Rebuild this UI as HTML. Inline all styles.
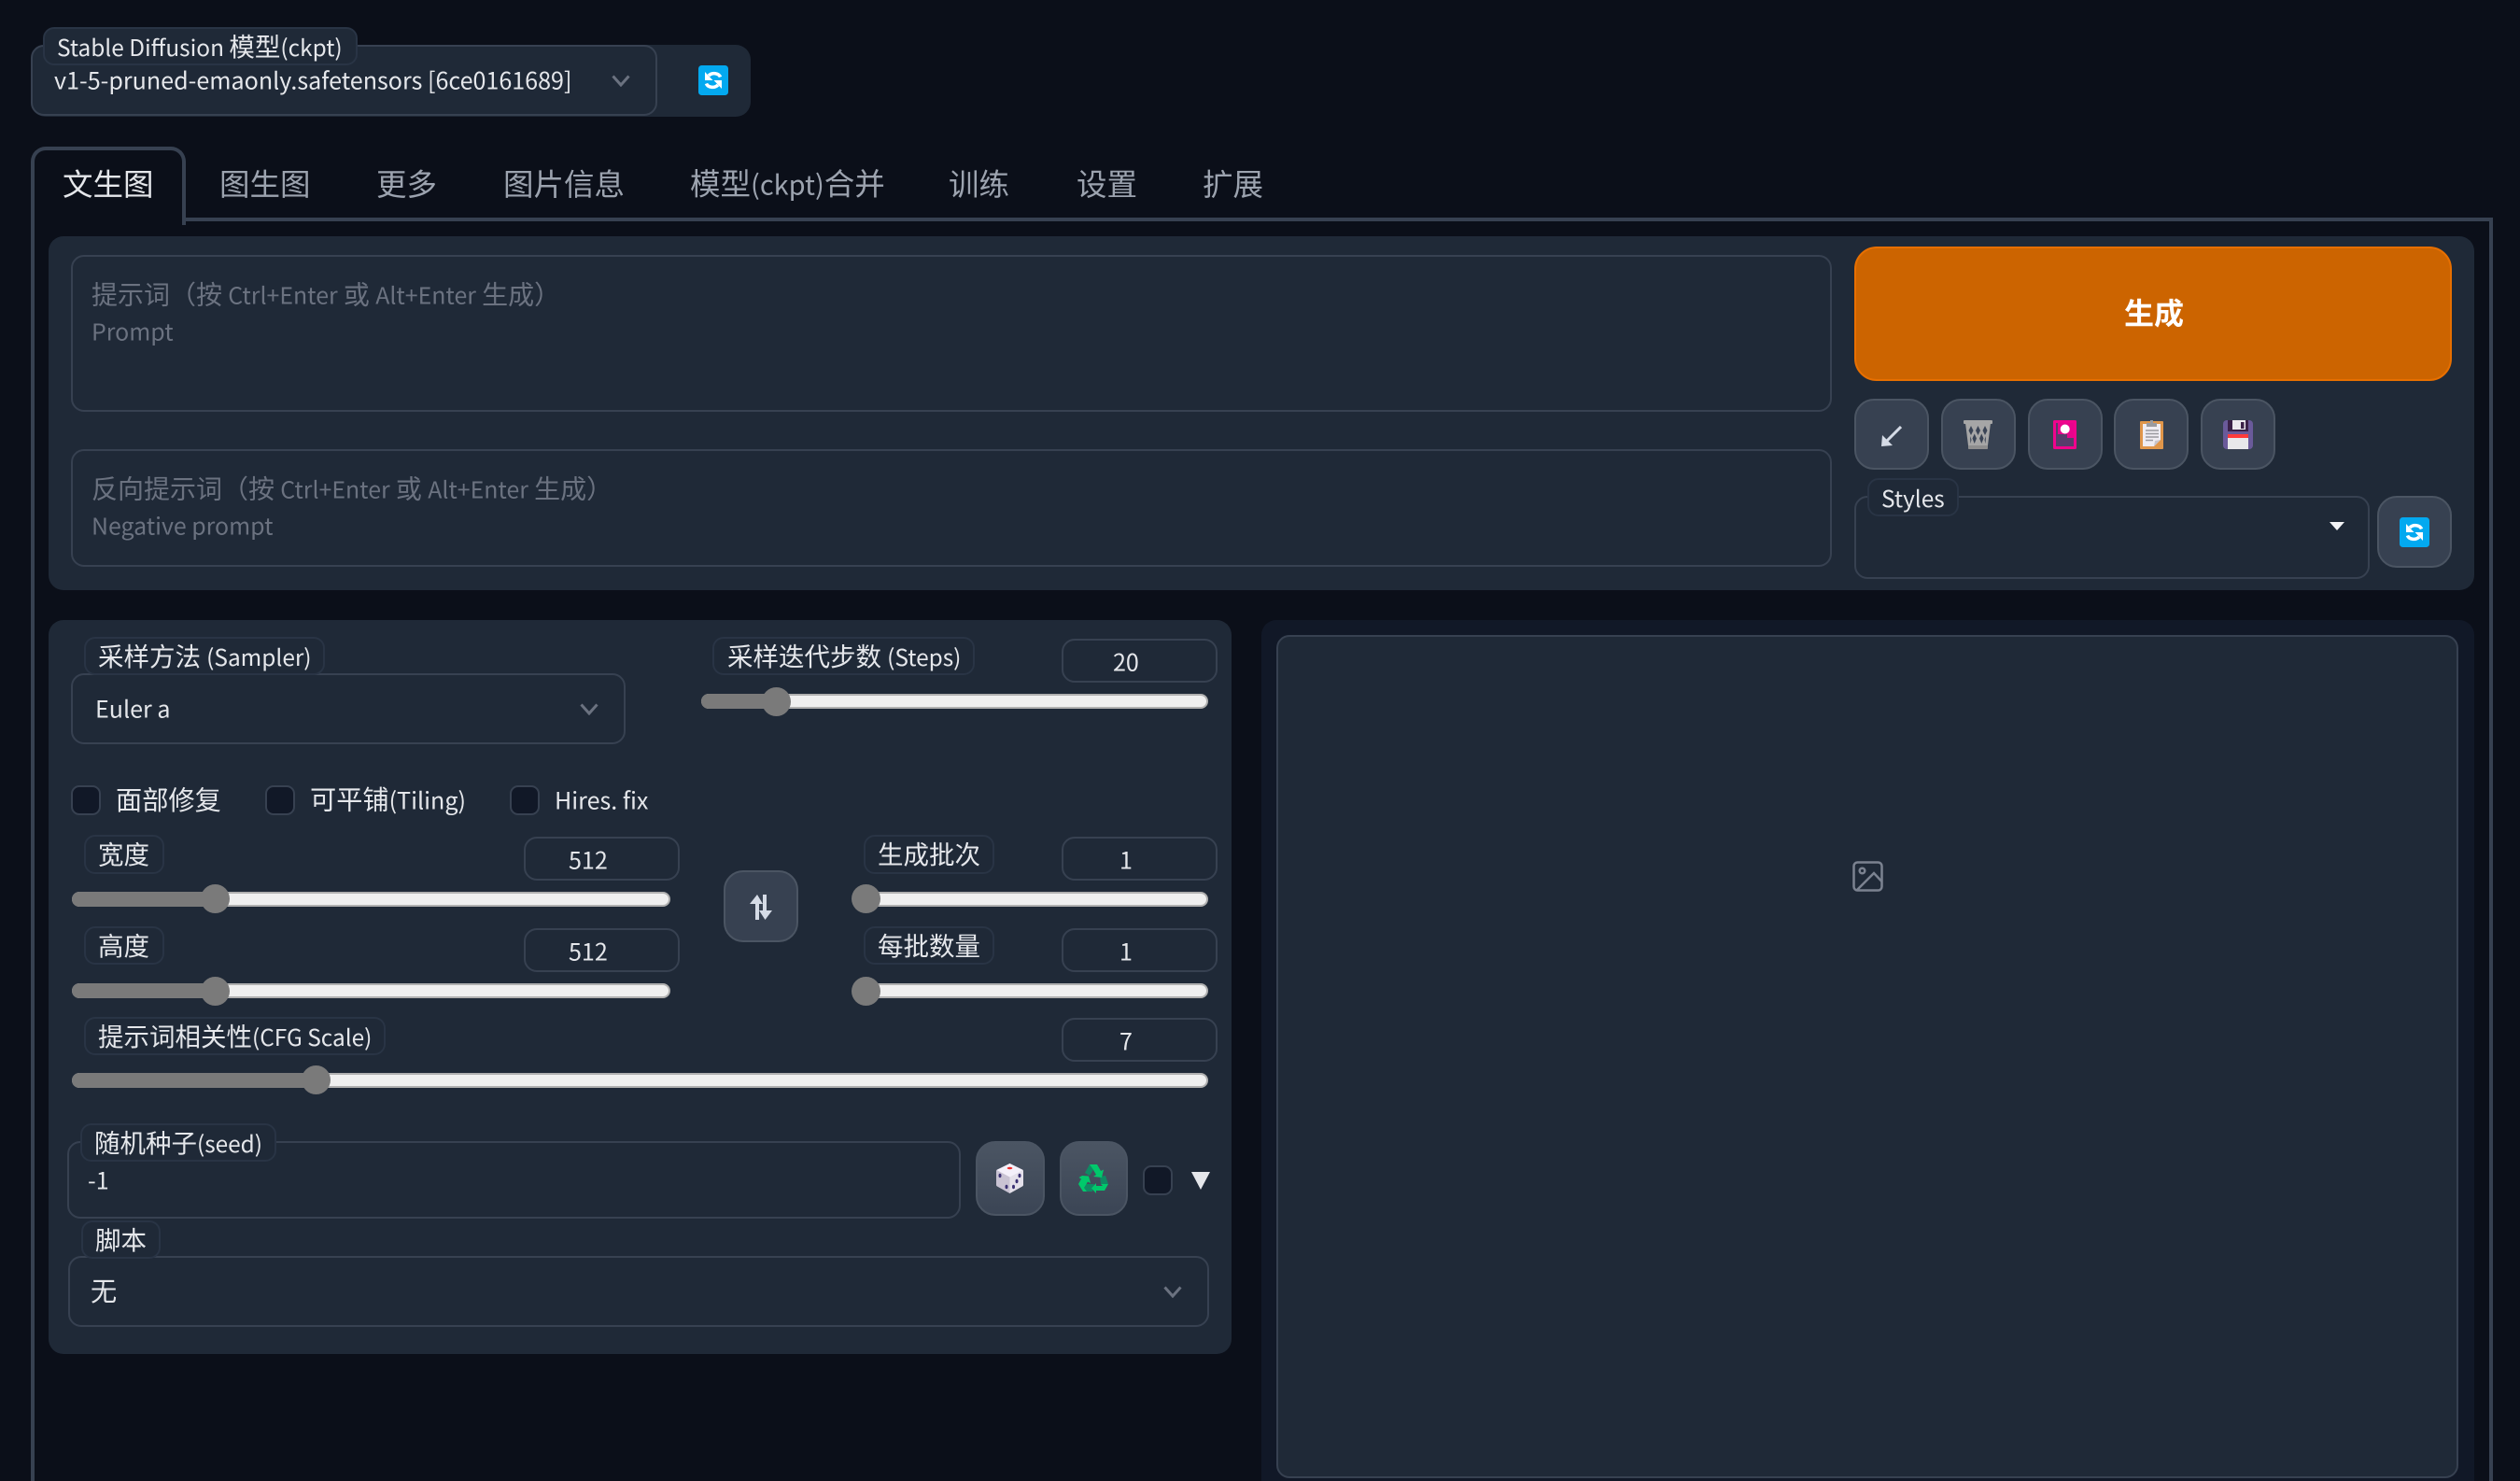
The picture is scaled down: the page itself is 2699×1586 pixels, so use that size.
<!DOCTYPE html>
<html lang="zh"><head><meta charset="utf-8"><title>Stable Diffusion</title>
<style>
*{box-sizing:border-box;margin:0;padding:0}
html,body{width:2699px;height:1586px;overflow:hidden;background:#0b0f19}
body{position:relative;font-family:"Noto Sans CJK SC","Liberation Sans",sans-serif;font-size:28.2px;color:#e5e7eb}
.a,.t,.lab,.box,.btn,.cb,.th,.tr,.fi,svg{position:absolute}
.t{white-space:nowrap;transform:translateY(calc(-50% - 2px));line-height:42px}
.l{font-size:25.1px}
.panel{position:absolute;background:#1f2937;border-radius:16px}
.box{border:2px solid #374151;border-radius:14px;background:#1f2937}
.lab{background:#1f2937;border:2px solid #293445;border-radius:12px;line-height:34px;padding-left:13px;white-space:nowrap;z-index:2;font-size:27.5px}
.lab .l{font-size:24.4px}
.num{position:absolute;width:167px;height:47px;border:2px solid #374151;border-radius:14px;background:#1f2937}
.btn{background:#374151;border:2px solid #4b5563;border-radius:21px}
.cb{width:32px;height:32px;background:#111827;border:2px solid #374151;border-radius:9px}
.ph{color:#6b7280;font-size:28px}
.ph .l{font-size:24.9px}
.tab{color:#9ca3af;font-size:32.5px}
.tab .l{font-size:29px}
.tr{height:16px;background:#efefef;border:2px solid #b0b0b0;border-radius:8px}
.fi{height:16px;background:#7a7a7a;border-radius:8px 0 0 8px}
.th{width:31px;height:31px;background:#7a7a7a;border-radius:50%}
</style></head><body>

<!-- top model row -->
<div class="panel" style="left:33px;top:48px;width:771px;height:77px;border-radius:16px"></div>
<div class="box" style="left:33px;top:48px;width:671px;height:76px"></div>
<div class="lab" style="left:46px;top:29px;width:337px;height:41px;border-radius:12px"><span class="l">Stable Diffusion </span>模型<span class="l">(ckpt)</span></div>
<div class="t" style="left:58px;top:87px"><span class="l">v1-5-pruned-emaonly.safetensors [6ce0161689]</span></div>
<svg style="left:655px;top:80px" width="20" height="13" viewBox="0 0 20 13"><path d="M1.5 1.5L10 11L18.5 1.5" fill="none" stroke="#6b7280" stroke-width="3"/></svg>
<svg style="left:748px;top:70px" width="32" height="32" viewBox="0 0 32 32"><rect width="32" height="32" rx="3.5" fill="#03a9f0"/><path d="M23.5 12.500C22 8.500 15 7 11 11M8.500 19.500C10 23.500 17 25 21 21" fill="none" stroke="#fff" stroke-width="3.600"/><path d="M7 7V16H15.500ZM25 25V16H16.500Z" fill="#fff"/></svg>

<!-- tab frame -->
<div class="a" style="left:33px;top:233px;width:2637px;height:1400px;border:4px solid #374151;border-bottom:0"></div>
<div class="a" style="left:33px;top:157px;width:166px;height:84px;background:#0b0f19;border:4px solid #374151;border-bottom:0;border-radius:16px 16px 0 0"></div>
<div class="t tab" style="left:67px;top:198px;color:#e5e7eb">文生图</div>
<div class="t tab" style="left:235px;top:198px">图生图</div>
<div class="t tab" style="left:403px;top:198px">更多</div>
<div class="t tab" style="left:539px;top:198px">图片信息</div>
<div class="t tab" style="left:739px;top:198px">模型<span class="l">(ckpt)</span>合并</div>
<div class="t tab" style="left:1016px;top:198px">训练</div>
<div class="t tab" style="left:1153px;top:198px">设置</div>
<div class="t tab" style="left:1288px;top:198px">扩展</div>

<!-- prompt panel -->
<div class="panel" style="left:52px;top:253px;width:2598px;height:379px"></div>
<div class="box" style="left:76px;top:273px;width:1886px;height:168px"></div>
<div class="box" style="left:76px;top:481px;width:1886px;height:126px"></div>
<div class="t ph" style="left:98px;top:317px">提示词（按 <span class="l">Ctrl+Enter</span> 或 <span class="l">Alt+Enter</span> 生成）</div>
<div class="t ph" style="left:98px;top:356px"><span class="l">Prompt</span></div>
<div class="t ph" style="left:98px;top:525px">反向提示词（按 <span class="l">Ctrl+Enter</span> 或 <span class="l">Alt+Enter</span> 生成）</div>
<div class="t ph" style="left:98px;top:564px"><span class="l">Negative prompt</span></div>

<div class="a" style="left:1986px;top:264px;width:640px;height:144px;background:#cc6400;border:2px solid #e76f00;border-radius:24px"></div>
<div class="t" style="left:2275px;top:336px;font-size:32px;font-weight:700;color:#fff">生成</div>

<div class="btn" style="left:1986px;top:427px;width:80px;height:76px"></div>
<div class="btn" style="left:2079px;top:427px;width:80px;height:76px"></div>
<div class="btn" style="left:2172px;top:427px;width:80px;height:76px"></div>
<div class="btn" style="left:2264px;top:427px;width:80px;height:76px"></div>
<div class="btn" style="left:2357px;top:427px;width:80px;height:76px"></div>

<svg style="left:2015px;top:456px" width="22" height="22" viewBox="0 0 22 22"><path d="M21 1L4 18" stroke="#d5dbe6" stroke-width="3" fill="none"/><path d="M0 22L1 10L12 21Z" fill="#d5dbe6"/></svg>

<svg style="left:2103px;top:450px" width="31" height="31" viewBox="0 0 31 31"><path d="M2 3H29L25.5 31H5.5Z" fill="#a6a6a6"/><rect width="31" height="4" rx="1" fill="#a6a6a6"/><rect x="5" y="27" width="21" height="4" rx="1" fill="#8e8e8e"/><g fill="#3a4455"><path d="M8 6L10.500 11L8 16L5.500 11ZM15.500 6L18 11L15.500 16L13 11ZM23 6L25.500 11L23 16L20.500 11Z"/><path d="M11.700 14.500L14 19.500L11.700 25L9.500 19.500ZM19.300 14.500L21.500 19.500L19.300 25L17 19.500ZM7 17L8.500 21L7.500 25ZM24 17L22.500 21L23.500 25Z"/></g></svg>

<svg style="left:2199px;top:450px" width="25" height="31" viewBox="0 0 25 31"><rect width="25" height="31" rx="1.500" fill="#f0048c"/><rect x="3" y="3" width="19" height="25" fill="#573d6b"/><path d="M5 3H22V19H15V15H5Z" fill="#e8048c"/><circle cx="12.700" cy="9.500" r="5" fill="#fff"/></svg>

<svg style="left:2292px;top:450px" width="25" height="31" viewBox="0 0 25 31"><rect y="1" width="25" height="30" rx="1" fill="#e0964a"/><path d="M3 4H22V21L15 28H3Z" fill="#efecf2"/><path d="M15 28L16 22L22 21Z" fill="#c9c5cc"/><path d="M7 3H11V0H14V3H18V7H7Z" fill="#9a9a9f"/><path d="M6 11H20M6 14.500H20M6 18H20M6 21.500H14" stroke="#9a9aa0" stroke-width="1.500"/></svg>

<svg style="left:2381px;top:450px" width="32" height="31" viewBox="0 0 32 31"><rect width="32" height="31" rx="4" fill="#6a5a9a"/><rect x="5" y="0" width="22" height="12" fill="#3a2148"/><rect x="10" y="0" width="14" height="10" fill="#ece9ef"/><rect x="19" y="2" width="3.500" height="7" fill="#3a2148"/><rect x="5" y="15" width="22" height="4" fill="#ff3b3b"/><rect x="5" y="19" width="22" height="12" fill="#e8e8ea"/></svg>

<!-- styles -->
<div class="box" style="left:1986px;top:531px;width:552px;height:89px"></div>
<div class="lab" style="left:2000px;top:512px;width:98px;height:41px"><span class="l">Styles</span></div>
<svg style="left:2495px;top:559px" width="16" height="9" viewBox="0 0 16 9"><path d="M0 0H16L8 9Z" fill="#f3f4f6"/></svg>
<div class="btn" style="left:2546px;top:531px;width:80px;height:77px"></div>
<svg style="left:2570px;top:554px" width="32" height="32" viewBox="0 0 32 32"><rect width="32" height="32" rx="3.500" fill="#03a9f0"/><path d="M23.500 12.500C22 8.500 15 7 11 11M8.500 19.500C10 23.500 17 25 21 21" fill="none" stroke="#fff" stroke-width="3.600"/><path d="M7 7V16H15.500ZM25 25V16H16.500Z" fill="#fff"/></svg>

<!-- left panel -->
<div class="panel" style="left:52px;top:664px;width:1267px;height:786px"></div>

<div class="box" style="left:76px;top:721px;width:594px;height:76px"></div>
<div class="lab" style="left:90px;top:682px;width:258px;height:41px">采样方法 <span class="l">(Sampler)</span></div>
<div class="t" style="left:102px;top:760px"><span class="l">Euler a</span></div>
<svg style="left:621px;top:753px" width="20" height="13" viewBox="0 0 20 13"><path d="M1.500 1.500L10 11L18.500 1.500" fill="none" stroke="#6b7280" stroke-width="3"/></svg>

<!-- steps -->
<div class="lab" style="left:763px;top:682px;width:281px;height:41px;padding-left:14px">采样迭代步数 <span class="l">(Steps)</span></div>
<div class="num" style="left:1137px;top:684px"></div>
<div class="t" style="left:1192px;top:710px"><span class="l">20</span></div>
<div class="tr" style="left:751px;top:743px;width:543px"></div>
<div class="fi" style="left:751px;top:743px;width:80px"></div>
<div class="th" style="left:816px;top:736px"></div>

<!-- checkboxes -->
<div class="cb" style="left:76px;top:841px"></div>
<div class="t" style="left:124px;top:858px">面部修复</div>
<div class="cb" style="left:284px;top:841px"></div>
<div class="t" style="left:332px;top:858px">可平铺<span class="l">(Tiling)</span></div>
<div class="cb" style="left:546px;top:841px"></div>
<div class="t" style="left:594px;top:858px"><span class="l">Hires. fix</span></div>

<!-- width -->
<div class="lab" style="left:90px;top:894px;width:86px;height:42px">宽度</div>
<div class="num" style="left:561px;top:896px"></div>
<div class="t" style="left:609px;top:922px"><span class="l">512</span></div>
<div class="tr" style="left:77px;top:955px;width:641px"></div>
<div class="fi" style="left:77px;top:955px;width:153px"></div>
<div class="th" style="left:215px;top:947px"></div>

<!-- height -->
<div class="lab" style="left:90px;top:992px;width:86px;height:41px">高度</div>
<div class="num" style="left:561px;top:994px"></div>
<div class="t" style="left:609px;top:1020px"><span class="l">512</span></div>
<div class="tr" style="left:77px;top:1053px;width:641px"></div>
<div class="fi" style="left:77px;top:1053px;width:153px"></div>
<div class="th" style="left:215px;top:1046px"></div>

<!-- swap -->
<div class="btn" style="left:775px;top:932px;width:80px;height:77px"></div>
<svg style="left:802px;top:958px" width="26" height="27" viewBox="0 0 26 27"><path d="M9 27V8" stroke="#d5dbe6" stroke-width="4"/><path d="M1 10L9 0L15 10Z" fill="#d5dbe6"/><path d="M17 0V19" stroke="#d5dbe6" stroke-width="4"/><path d="M11 17H25L17.500 27Z" fill="#d5dbe6"/></svg>

<!-- batch -->
<div class="lab" style="left:925px;top:894px;width:140px;height:42px">生成批次</div>
<div class="num" style="left:1137px;top:896px"></div>
<div class="t" style="left:1199px;top:922px"><span class="l">1</span></div>
<div class="tr" style="left:925px;top:955px;width:369px"></div>
<div class="th" style="left:912px;top:947px"></div>

<div class="lab" style="left:925px;top:992px;width:140px;height:41px">每批数量</div>
<div class="num" style="left:1137px;top:994px"></div>
<div class="t" style="left:1199px;top:1020px"><span class="l">1</span></div>
<div class="tr" style="left:925px;top:1053px;width:369px"></div>
<div class="th" style="left:912px;top:1046px"></div>

<!-- cfg -->
<div class="lab" style="left:90px;top:1089px;width:323px;height:41px">提示词相关性<span class="l">(CFG Scale)</span></div>
<div class="num" style="left:1137px;top:1090px"></div>
<div class="t" style="left:1199px;top:1116px"><span class="l">7</span></div>
<div class="tr" style="left:77px;top:1149px;width:1217px"></div>
<div class="fi" style="left:77px;top:1149px;width:261px"></div>
<div class="th" style="left:323px;top:1141px"></div>

<!-- seed -->
<div class="box" style="left:72px;top:1222px;width:957px;height:83px"></div>
<div class="lab" style="left:86px;top:1203px;width:210px;height:41px">随机种子<span class="l">(seed)</span></div>
<div class="t" style="left:94px;top:1265px"><span class="l">-1</span></div>

<div class="btn" style="left:1045px;top:1222px;width:74px;height:80px;background:linear-gradient(#4b5563,#3b4555)"></div>
<div class="btn" style="left:1135px;top:1222px;width:73px;height:80px;background:linear-gradient(#4b5563,#3b4555)"></div>

<svg style="left:1067px;top:1246px" width="29" height="32" viewBox="0 0 29 32"><path d="M14.500 0L28 6.500Q29 7 29 8V23Q29 24 28 24.500L14.500 32Z" fill="#e4e0ea"/><path d="M14.500 0L1 6.500Q0 7 0 8V23Q0 24 1 24.500L14.500 32Z" fill="#c9c3d3"/><path d="M14.500 0L28.500 7L14.500 14.500L0.500 7Z" fill="#f4f0fa"/><ellipse cx="14.500" cy="5" rx="2.800" ry="1.300" fill="#ef2b2b"/><g fill="#3b3174"><ellipse cx="4" cy="13" rx="1.500" ry="2.200"/><ellipse cx="11" cy="25" rx="1.500" ry="2.200"/><ellipse cx="25" cy="13" rx="1.500" ry="2.200"/><ellipse cx="22" cy="19" rx="1.500" ry="2.200"/><ellipse cx="18.500" cy="25" rx="1.500" ry="2.200"/></g></svg>

<svg style="left:1155px;top:1247px" width="32" height="31" viewBox="0 0 32 31"><g fill="#0f8a63"><path d="M12 0L7 9L12 12L17 4Z"/><path d="M23 13L29 12L32 21L24 21Z"/><path d="M8 21L17 21L15 29L8 29L5 25Z"/></g><g fill="#00c96b"><path d="M12 0H20L24 7L27 5.500L25 14L16 13L19 11L15.500 5Z"/><path d="M4 12L11 12.500L13 20L10 18.500L6 25L9 29H5L0 21L3 15.500L0.500 14Z"/><path d="M32 21L28 28H19V31L14 25.500L19 20V23H26L24 21Z"/></g></svg>

<div class="cb" style="left:1224px;top:1248px"></div>
<svg style="left:1276px;top:1255px" width="20" height="19" viewBox="0 0 20 19"><path d="M0 0H20L10 19Z" fill="#e5e7eb"/></svg>

<!-- script -->
<div class="box" style="left:73px;top:1345px;width:1222px;height:76px"></div>
<div class="lab" style="left:87px;top:1307px;width:85px;height:41px">脚本</div>
<div class="t" style="left:97px;top:1384px">无</div>
<svg style="left:1246px;top:1377px" width="20" height="13" viewBox="0 0 20 13"><path d="M1.500 1.500L10 11L18.500 1.500" fill="none" stroke="#6b7280" stroke-width="3"/></svg>

<!-- right panel -->
<div class="panel" style="left:1351px;top:664px;width:1299px;height:922px;background:#111827;border-radius:16px 16px 0 0"></div>
<div class="box" style="left:1367px;top:680px;width:1266px;height:903px;border-radius:14px"></div>
<svg style="left:1984px;top:922px" width="33" height="33" viewBox="0 0 33 33"><rect x="1.500" y="1.500" width="30" height="30" rx="4" fill="none" stroke="#7b8290" stroke-width="2.500"/><circle cx="10.500" cy="10.500" r="2.800" fill="none" stroke="#7b8290" stroke-width="2.500"/><path d="M5 31L23 13L31.500 22" fill="none" stroke="#7b8290" stroke-width="2.500"/></svg>

</body></html>
